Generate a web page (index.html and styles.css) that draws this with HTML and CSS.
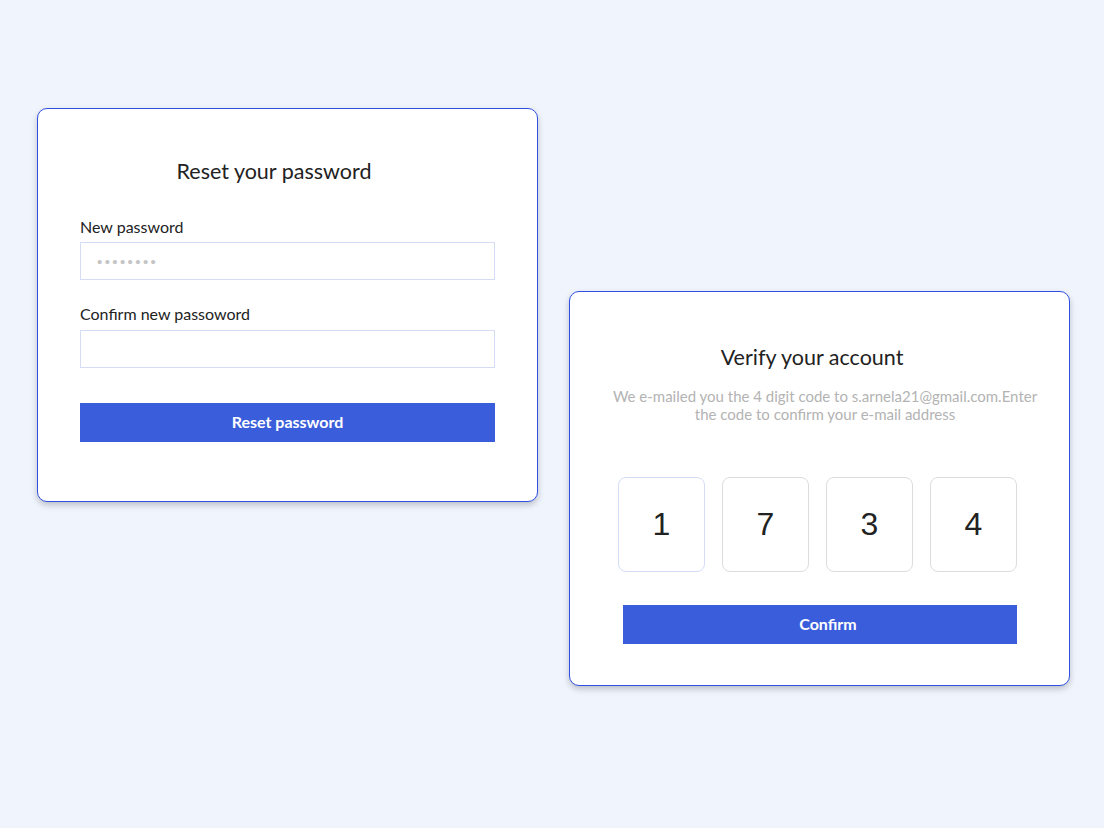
FILE: index.html
```html
<!DOCTYPE html>
<html lang="en">
<head>
<meta charset="utf-8">
<title>Reset / Verify</title>
<link rel="stylesheet" href="styles.css">
</head>
<body>
<main class="page">
  <section class="card card-reset">
    <h1 class="title title-reset">Reset your password</h1>
    <label class="label">New password</label>
    <div class="input"><span class="dots">••••••••</span></div>
    <label class="label label-2">Confirm new passoword</label>
    <div class="input"></div>
    <button class="btn btn-reset">Reset password</button>
  </section>

  <section class="card card-verify">
    <h1 class="title title-verify">Verify your account</h1>
    <p class="desc">We e-mailed you the 4 digit code to s.arnela21@gmail.com.Enter the code to confirm your e-mail address</p>
    <div class="code">
      <div class="digit digit-active">1</div>
      <div class="digit">7</div>
      <div class="digit">3</div>
      <div class="digit">4</div>
    </div>
    <button class="btn btn-confirm">Confirm</button>
  </section>
</main>
</body>
</html>
```

FILE: styles.css
```css
* { box-sizing: border-box; }

html, body {
  margin: 0;
  padding: 0;
}

body {
  width: 1104px;
  height: 828px;
  background: #f0f4fd;
  font-family: Lato, "Open Sans", "Liberation Sans", sans-serif;
  color: #222;
  overflow: hidden;
}

.page {
  display: flex;
  align-items: flex-start;
  gap: 31px;
  padding: 108px 0 0 37px;
}

.card {
  background: #fff;
  border: 1px solid #2f50e2;
  border-radius: 10px;
  box-shadow: 0 3px 6px rgba(0, 0, 0, 0.22);
  display: flex;
  flex-direction: column;
}

.card-reset {
  width: 501px;
  height: 394px;
  padding: 49px 42px 0 42px;
}

.card-verify {
  width: 501px;
  height: 395px;
  margin-top: 183px;
  padding: 52px 48px 0 48px;
}

.title {
  margin: 0;
  font-size: 21.5px;
  line-height: 26px;
  font-weight: 400;
  text-align: center;
  color: #222;
}

.title-reset { padding-right: 27px; }
.title-verify { padding-right: 15px; }

.label {
  display: block;
  font-size: 16px;
  line-height: 19px;
  margin-top: 33px;
  color: #222;
}

.label-2 { margin-top: 24px; }

.input {
  margin-top: 6px;
  height: 38px;
  border: 1px solid #d4dcf6;
  background: #fff;
  display: flex;
  align-items: center;
  padding-left: 16px;
}

.label-2 + .input { margin-top: 7px; }

.dots {
  font-family: "Liberation Sans", sans-serif;
  font-size: 15px;
  letter-spacing: 2.4px;
  color: #c4c4c4;
}

.btn {
  display: block;
  border: none;
  background: #3a5edb;
  color: #fff;
  font-family: Lato, "Open Sans", sans-serif;
  font-weight: 700;
  font-size: 16px;
  height: 39px;
  padding: 0 0 3px 0;
  cursor: pointer;
}

.btn-reset {
  margin-top: 35px;
  width: 100%;
}

.desc {
  margin: 17px -19px 0 -8px;
  font-size: 15px;
  line-height: 18px;
  color: #b3b3b3;
  text-align: center;
}

.code {
  margin-top: 54px;
  display: flex;
  gap: 17px;
}

.digit {
  width: 87px;
  height: 95px;
  border: 1px solid #dcdcdc;
  border-radius: 8px;
  display: flex;
  align-items: center;
  justify-content: center;
  font-family: "Liberation Sans", Arial, sans-serif;
  font-size: 32px;
  color: #222;
}

.digit-active { border-color: #d4dcf6; }

.btn-confirm {
  margin-top: 33px;
  margin-left: 5px;
  width: 394px;
  padding-left: 16px;
}
```
